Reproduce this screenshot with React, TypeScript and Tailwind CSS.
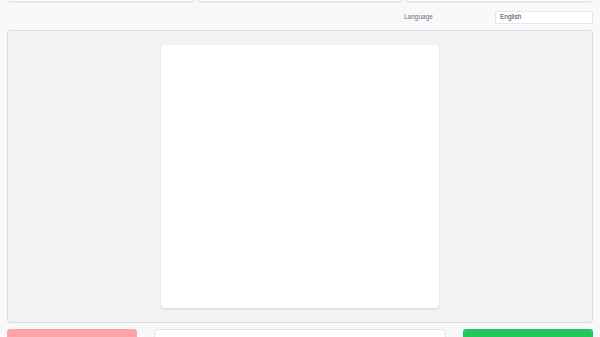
import React from "react";

export default function App() {
  return (
    <div
      className="w-[600px] h-[337px] overflow-hidden bg-[#f8f9fb] px-[7px]"
      style={{ fontFamily: '"Liberation Sans", Arial, sans-serif' }}
    >
      {/* Top fields (scrolled mostly out of view) */}
      <div className="flex gap-[3px] -mt-[20px]">
        <div className="w-[188px] h-[22px] bg-white rounded-[3px] border border-[#e3e5e8] shadow-[0_1px_1px_rgba(0,0,0,0.06)]" />
        <div className="w-[205px] h-[22px] bg-white rounded-[3px] border border-[#e3e5e8] shadow-[0_1px_1px_rgba(0,0,0,0.06)]" />
        <div className="flex-1 h-[22px] bg-white rounded-[3px] border border-[#e3e5e8] shadow-[0_1px_1px_rgba(0,0,0,0.06)]" />
      </div>

      {/* Language row */}
      <div className="flex items-center h-[26px] mt-[2px]">
        <div className="flex-1" />
        <div className="w-[189px] flex items-center">
          <span className="w-[91px] text-[6.5px] text-[#6b7280] leading-none">Language</span>
          <div className="flex-1 h-[13px] bg-white border border-[#e5e7eb] rounded-[2px] flex items-center px-[4px]">
            <span className="text-[6.5px] text-[#374151] leading-none">English</span>
          </div>
        </div>
      </div>

      {/* Preview panel */}
      <div className="h-[293px] bg-[#f3f3f3] border border-[#dcdee2] rounded-[3px] flex justify-center pt-[14px]">
        <div className="w-[278px] h-[263px] bg-white rounded-[4px] shadow-[0_1px_3px_rgba(0,0,0,0.12)]" />
      </div>

      {/* Bottom actions */}
      <div className="flex gap-[17px] mt-[6px]">
        <div className="w-[130px] h-[20px] bg-[#fca5a5] rounded-t-[3px]" />
        <div className="flex-1 h-[20px] bg-white border border-[#e3e5e8] rounded-t-[3px]" />
        <div className="w-[130px] h-[20px] bg-[#22c55e] rounded-t-[3px]" />
      </div>
    </div>
  );
}
